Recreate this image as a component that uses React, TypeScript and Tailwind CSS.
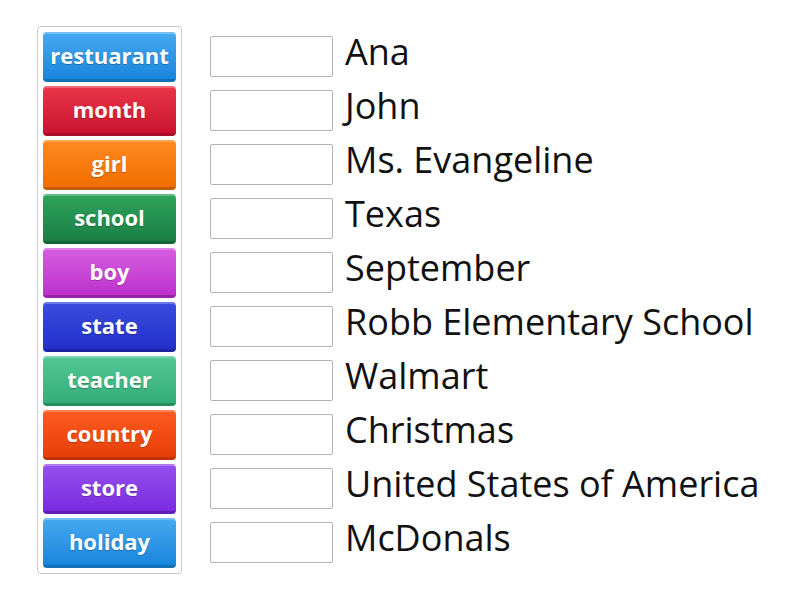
const tiles = [
  { label: 'restuarant', cls: 'from-[#46a9f0] to-[#1686dc] border-[#1270b8]' },
  { label: 'month', cls: 'from-[#e93449] to-[#cc1230] border-[#a80d26]' },
  { label: 'girl', cls: 'from-[#ff8a1c] to-[#f06d00] border-[#c85a00]' },
  { label: 'school', cls: 'from-[#2ea45c] to-[#1b7f44] border-[#146636]' },
  { label: 'boy', cls: 'from-[#d65ee0] to-[#be30cc] border-[#9a22a8]' },
  { label: 'state', cls: 'from-[#3b4ce0] to-[#2330c8] border-[#1a25a2]' },
  { label: 'teacher', cls: 'from-[#52c995] to-[#34ad78] border-[#278c60]' },
  { label: 'country', cls: 'from-[#ff5a1e] to-[#e64008] border-[#bd3304]' },
  { label: 'store', cls: 'from-[#9650ee] to-[#7a2ae0] border-[#6020b8]' },
  { label: 'holiday', cls: 'from-[#46a9f0] to-[#1686dc] border-[#1270b8]' }
];

const answers = [
  'Ana',
  'John',
  'Ms. Evangeline',
  'Texas',
  'September',
  'Robb Elementary School',
  'Walmart',
  'Christmas',
  'United States of America',
  'McDonals'
];

export default function App() {
  return (
    <div
      className="min-h-screen bg-white flex items-start pl-[37px] pt-[26px]"
      style={{ fontFamily: '"Open Sans", "Noto Sans", sans-serif' }}
    >
      <div className="w-[145px] rounded-[4px] border border-[#c8c8c8] px-[5px] py-[5px] flex flex-col gap-[4px]">
        {tiles.map((t) => (
          <div
            key={t.label}
            className={`h-[50px] rounded-[4px] bg-gradient-to-b border-b-[3px] shadow-[inset_0_2px_0_rgba(255,255,255,0.25)] flex items-center justify-center text-white font-bold text-[22px] [text-shadow:0_1px_1px_rgba(0,0,0,0.25)] ${t.cls}`}
          >
            {t.label}
          </div>
        ))}
      </div>
      <div className="ml-[28px] pt-[5px] flex flex-col gap-[4px]">
        {answers.map((a) => (
          <div key={a} className="h-[50px] flex items-center gap-[12px]">
            <div className="w-[123px] h-[41px] rounded-[2px] border border-[#b4b4b4] bg-white" />
            <span className="text-[36px] text-[#111] leading-none -mt-[9px]">{a}</span>
          </div>
        ))}
      </div>
    </div>
  );
}
